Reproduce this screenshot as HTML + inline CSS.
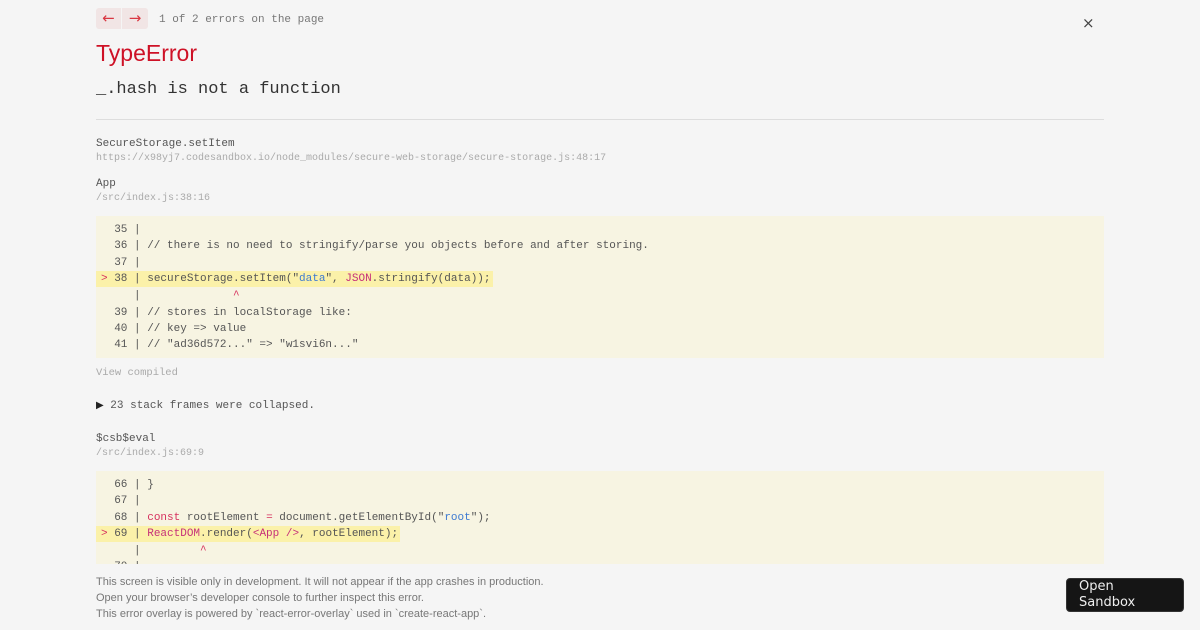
<!DOCTYPE html>
<html><head><meta charset="utf-8"><style>
body{margin:0;background:#f5f5f5;width:1200px;height:630px;overflow:hidden;position:relative;font-family:"Liberation Mono",monospace;}
.a{position:absolute;white-space:pre;}
.m{font-family:"Liberation Mono",monospace;font-size:11px;}
.code{position:absolute;left:96px;width:1008px;background:#f7f4e2;}
.ln{position:absolute;left:0;white-space:pre;font-family:"Liberation Mono",monospace;font-size:11px;color:#555;height:16px;line-height:16px;padding-left:5px;}
.hl{background:#fbf1a9;}
.r{color:#d6305d}.b{color:#3d7ad1}.p{color:#c6307a}
</style></head><body>
<div class="a" style="left:96px;top:8px;width:25px;height:21px;background:#f1e5e5;border-radius:3px 0 0 3px;color:#d93742;font-size:15px;line-height:21px;text-align:center;font-family:'DejaVu Sans',sans-serif">←</div>
<div class="a" style="left:122px;top:8px;width:26px;height:21px;background:#f1e5e5;border-radius:0 3px 3px 0;color:#d93742;font-size:15px;line-height:21px;text-align:center;font-family:'DejaVu Sans',sans-serif">→</div>
<div class="a m" style="left:159px;top:14px;color:#777;">1 of 2 errors on the page</div>
<div class="a" style="left:1082px;top:13px;color:#444;font-size:15px;font-family:'DejaVu Sans',sans-serif;line-height:20px">×</div>
<div class="a" style="left:96px;top:40px;color:#ce1126;font-family:'Liberation Sans',sans-serif;font-size:23px;">TypeError</div>
<div class="a" style="left:96px;top:80px;color:#333;font-size:17px;">_.hash is not a function</div>
<div class="a" style="left:96px;top:119px;width:1008px;height:1px;background:#ddd"></div>
<div class="a m" style="left:96px;top:138px;color:#555">SecureStorage.setItem</div>
<div class="a m" style="left:96px;top:153px;color:#aaa;font-size:10px">https://x98yj7.codesandbox.io/node_modules/secure-web-storage/secure-storage.js:48:17</div>
<div class="a m" style="left:96px;top:178px;color:#555">App</div>
<div class="a m" style="left:96px;top:193px;color:#aaa;font-size:10px">/src/index.js:38:16</div>
<div class="code" style="top:216px;height:142px">
<div class="ln" style="top:6px">  35 |</div>
<div class="ln" style="top:22px">  36 | // there is no need to stringify/parse you objects before and after storing.</div>
<div class="ln" style="top:39px">  37 |</div>
<div class="ln hl" style="top:55px;padding-right:2px"><span class="r">&gt;</span> 38 | secureStorage.setItem("<span class="b">data</span>", <span class="p">JSON</span>.stringify(data));</div>
<div class="ln" style="top:72px">     |              <span class="r">^</span></div>
<div class="ln" style="top:89px">  39 | // stores in localStorage like:</div>
<div class="ln" style="top:105px">  40 | // key =&gt; value</div>
<div class="ln" style="top:121px">  41 | // "ad36d572..." =&gt; "w1svi6n..."</div>
</div>
<div class="a m" style="left:96px;top:367px;color:#aaa;font-size:10.5px">View compiled</div>
<div class="a m" style="left:96px;top:400px;color:#555"><span style="font-family:'DejaVu Sans',sans-serif;font-size:10px;color:#222">▶</span> 23 stack frames were collapsed.</div>
<div class="a m" style="left:96px;top:433px;color:#555">$csb$eval</div>
<div class="a m" style="left:96px;top:448px;color:#aaa;font-size:10px">/src/index.js:69:9</div>
<div class="code" style="top:471px;height:93px;overflow:hidden">
<div class="ln" style="top:6px">  66 | }</div>
<div class="ln" style="top:22px">  67 |</div>
<div class="ln" style="top:39px">  68 | <span class="r">const</span> rootElement <span class="r">=</span> document.getElementById("<span class="b">root</span>");</div>
<div class="ln hl" style="top:55px;padding-right:2px"><span class="r">&gt;</span> 69 | <span class="p">ReactDOM</span>.render(<span class="p">&lt;App /&gt;</span>, rootElement);</div>
<div class="ln" style="top:72px">     |         <span class="r">^</span></div>
<div class="ln" style="top:88px">  70 |</div>
</div>
<div class="a" style="left:96px;top:574px;font-family:'Liberation Sans',sans-serif;font-size:11px;line-height:16px;color:#777">This screen is visible only in development. It will not appear if the app crashes in production.
Open your browser’s developer console to further inspect this error.
This error overlay is powered by `react-error-overlay` used in `create-react-app`.</div>
<div class="a" style="left:1066px;top:578px;width:104px;height:32px;padding-left:12px;background:#151515;border:1px solid #333;border-radius:4px;box-sizing:content-box;color:#eee;font-family:'DejaVu Sans',sans-serif;font-size:13px;line-height:16px">Open
Sandbox</div>
</body></html>
